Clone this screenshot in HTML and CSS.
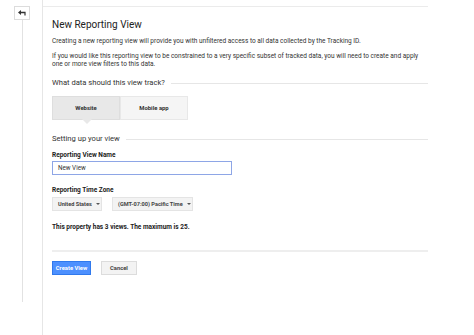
FILE: index.html
```html
<!DOCTYPE html>
<html>
<head>
<meta charset="utf-8">
<link rel="stylesheet" href="styles.css">
</head>
<body>
<div class="page">
  <div class="rail">
    <div class="back">
      <svg width="9" height="6" viewBox="0 0 9 6"><path d="M0 2.5 L3 0 V1.8 H7.6 V5.5 H6.4 V3.2 H3 V5 Z" fill="#333"/></svg>
    </div>
    <div class="rail-line"></div>
  </div>
  <div class="panel">
    <div class="topline"></div>
    <div class="content">
      <h1 class="title">New Reporting View</h1>
      <p class="text">Creating a new reporting view will provide you with unfiltered access to all data collected by the Tracking ID.</p>
      <p class="text second">If you would like this reporting view to be constrained to a very specific subset of tracked data, you will need to create and apply one or more view filters to this data.</p>
      <div class="section-head"><span>What data should this view track?</span><div class="rule"></div></div>
      <div class="tabs">
        <div class="tab active">Website</div>
        <div class="tab">Mobile app</div>
      </div>
      <div class="section-head second"><span>Setting up your view</span><div class="rule"></div></div>
      <div class="label">Reporting View Name</div>
      <div class="input">New View</div>
      <div class="label tz">Reporting Time Zone</div>
      <div class="selects">
        <div class="select us">United States <span class="caret"></span></div>
        <div class="select pt">(GMT-07:00) Pacific Time <span class="caret"></span></div>
      </div>
      <div class="note">This property has 3 views. The maximum is 25.</div>
      <div class="divider"></div>
      <div class="buttons">
        <div class="btn primary">Create View</div>
        <div class="btn">Cancel</div>
      </div>
    </div>
  </div>
</div>
</body>
</html>
```
FILE: styles.css
```css
html, body {
  margin: 0;
  padding: 0;
  background: #fff;
  font-family: Roboto, "Liberation Sans", Arial, sans-serif;
  color: #222;
}
.page {
  display: flex;
  height: 335px;
}
.rail {
  width: 42px;
  display: flex;
  flex-direction: column;
  align-items: flex-start;
  padding-left: 14px;
  box-sizing: border-box;
  padding-top: 6px;
}
.back {
  width: 16px;
  height: 14px;
  box-sizing: border-box;
  border: 1px solid #dcdcdc;
  background: #fff;
  display: flex;
  align-items: center;
  justify-content: center;
}
.rail-line {
  width: 1px;
  height: 282px;
  background: #e2e2e2;
  margin-left: 8px;
}
.panel {
  flex: 1;
  border-left: 1px solid #e6e6e6;
  padding-right: 46px;
}
.topline {
  margin-top: 6px;
  height: 1px;
  background: #ebebeb;
}
.content {
  padding-left: 9px;
}
.title {
  margin: 11px 0 0;
  font-size: 10px;
  font-weight: 400;
  line-height: 14px;
  color: #222;
}
.text {
  margin: 5px 0 0;
  max-width: 368px;
  font-size: 6.5px;
  line-height: 8px;
  color: #333;
}
.text.second {
  margin-top: 7px;
}
.section-head {
  display: flex;
  align-items: center;
  margin-top: 10px;
  font-size: 7.6px;
  color: #333;
  line-height: 10px;
}
.section-head .rule {
  flex: 1;
  height: 1px;
  background: #e6e6e6;
  margin-left: 6px;
}
.section-head.second {
  margin-top: 14px;
}
.tabs {
  display: flex;
  margin-top: 8px;
}
.tab {
  width: 68px;
  height: 24px;
  display: flex;
  align-items: center;
  justify-content: center;
  font-size: 5.9px;
  font-weight: 700;
  color: #333;
  background: #f5f5f5;
  box-sizing: border-box;
  border: 1px solid #e8e8e8;
}
.tab.active {
  background: #e8e8e8;
  border-color: #dedede;
  position: relative;
}
.tab.active::after {
  content: "";
  position: absolute;
  left: 29px;
  bottom: -5px;
  border-left: 5px solid transparent;
  border-right: 5px solid transparent;
  border-top: 5px solid #e8e8e8;
}
.label {
  margin-top: 7px;
  font-size: 6.5px;
  font-weight: 700;
  color: #222;
  line-height: 8px;
}
.label.tz {
  margin-top: 11px;
}
.input {
  margin-top: 2px;
  width: 180px;
  height: 14px;
  box-sizing: border-box;
  border: 1px solid #8ea6e6;
  font-size: 6.3px;
  color: #333;
  padding-left: 5px;
  display: flex;
  align-items: center;
}
.selects {
  display: flex;
  gap: 10px;
  margin-top: 3px;
}
.select {
  height: 14px;
  box-sizing: border-box;
  background: #f3f3f3;
  border: 1px solid #e4e4e4;
  font-size: 5.6px;
  font-weight: 700;
  color: #444;
  display: flex;
  align-items: center;
  padding-left: 5px;
  white-space: nowrap;
}
.select.us { width: 50px; }
.select.pt { width: 81px; }
.caret {
  flex: none;
  width: 0;
  height: 0;
  border-left: 2px solid transparent;
  border-right: 2px solid transparent;
  border-top: 2px solid #555;
  margin-left: 4px;
}
.note {
  margin-top: 12px;
  font-size: 6.5px;
  font-weight: 700;
  color: #222;
  line-height: 8px;
}
.divider {
  margin-top: 19px;
  height: 2px;
  background: #eeeeee;
}
.buttons {
  display: flex;
  gap: 10px;
  margin-top: 9px;
}
.btn {
  height: 14px;
  box-sizing: border-box;
  display: flex;
  align-items: center;
  justify-content: center;
  font-size: 5.8px;
  font-weight: 700;
  color: #444;
  background: #f3f3f3;
  border: 1px solid #dcdcdc;
  width: 36px;
}
.btn.primary {
  width: 39px;
  background: #4d90fe;
  border-color: #3079ed;
  color: #fff;
}
```
